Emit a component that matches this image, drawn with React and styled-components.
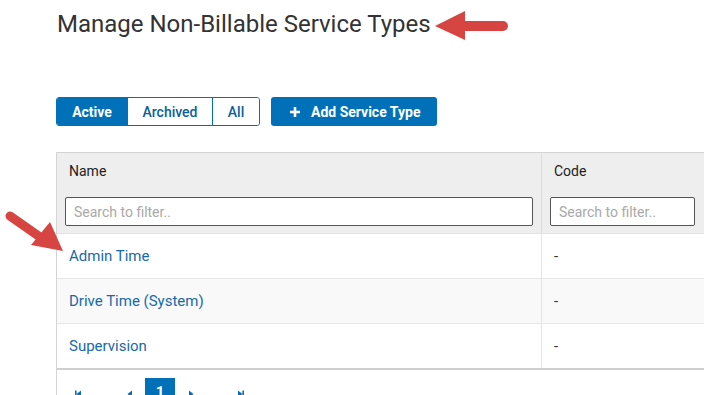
import React from "react";
import styled, { createGlobalStyle } from "styled-components";

const GlobalStyle = createGlobalStyle`
  html, body {
    margin: 0;
    padding: 0;
    background: #fff;
    overflow: hidden;
    font-family: Roboto, "Liberation Sans", sans-serif;
  }
`;

const Page = styled.div`
  position: relative;
  width: 704px;
  height: 395px;
  overflow: hidden;
  padding-left: 56px;
  box-sizing: border-box;
`;

const Title = styled.h1`
  margin: 0;
  padding-top: 8px;
  padding-left: 1px;
  font-size: 24px;
  font-weight: 400;
  color: #333;
  line-height: 32px;
`;

const Toolbar = styled.div`
  display: flex;
  gap: 11px;
  margin-top: 57px;
  height: 29px;
`;

const Group = styled.div`
  display: flex;
  border: 1px solid #0071b9;
  border-radius: 3px;
  overflow: hidden;
`;

const GroupButton = styled.button`
  border: none;
  border-left: ${(p) => (p.$first ? "none" : "1px solid #0071b9")};
  background: ${(p) => (p.$active ? "#0071b9" : "#fff")};
  color: ${(p) => (p.$active ? "#fff" : "#0a5f9c")};
  font-family: Roboto, "Liberation Sans", sans-serif;
  font-size: 14px;
  font-weight: ${(p) => (p.$active ? 700 : 500)};
  width: ${(p) => p.$w}px;
  padding: 0;
  cursor: pointer;
`;

const AddButton = styled.button`
  display: flex;
  align-items: center;
  gap: 10px;
  border: none;
  border-radius: 3px;
  background: #0071b9;
  color: #fff;
  font-family: Roboto, "Liberation Sans", sans-serif;
  font-size: 14px;
  font-weight: 700;
  width: 166px;
  padding: 0 0 0 18px;
  cursor: pointer;
`;

const Table = styled.div`
  margin-top: 26px;
  width: 650px;
  border: 1px solid #d4d4d4;
  border-bottom: none;
`;

const Row = styled.div`
  display: grid;
  grid-template-columns: 484px 1fr;
  background: ${(p) => p.$bg || "#fff"};
  border-bottom: 1px solid ${(p) => p.$line || "#e6e6e6"};
`;

const HeadCell = styled.div`
  padding: 9px 8px 7px 8px;
  border-left: ${(p) => (p.$divider ? "1px solid #dcdcdc" : "none")};
`;

const HeadLabel = styled.div`
  font-size: 14px;
  font-weight: 400;
  color: #222;
  padding-left: 4px;
  height: 18px;
  line-height: 18px;
  margin-bottom: 17px;
`;

const Filter = styled.input`
  box-sizing: border-box;
  width: ${(p) => p.$w || "100%"};
  height: 29px;
  border: 1px solid #555;
  border-radius: 2px;
  padding: 0 8px;
  font-family: Roboto, "Liberation Sans", sans-serif;
  font-size: 14px;
  color: #333;
  &::placeholder {
    color: #a9a9a9;
  }
`;

const Cell = styled.div`
  height: 44px;
  display: flex;
  align-items: center;
  padding-left: 12px;
  font-size: 15px;
  color: ${(p) => (p.$link ? "#1769aa" : "#333")};
  border-left: ${(p) => (p.$divider ? "1px solid #e3e3e3" : "none")};
`;

const Pager = styled.div`
  display: flex;
  align-items: flex-start;
  padding-top: 8px;
  height: 40px;
  border-top: 1px solid #cfcfcf;
`;

const PageIcon = styled.span`
  width: ${(p) => p.$w}px;
  box-sizing: border-box;
  display: flex;
  justify-content: ${(p) => (p.$end ? "flex-end" : "center")};
  padding-right: ${(p) => (p.$end ? "10px" : "0")};
  padding-top: 11px;
`;

const PageNum = styled.span`
  width: 30px;
  height: 28px;
  background: #0071b9;
  color: #fff;
  font-size: 15px;
  font-weight: 700;
  display: flex;
  justify-content: center;
  padding-top: 5px;
  box-sizing: border-box;
`;

const Annotation = styled.svg`
  position: absolute;
  left: ${(p) => p.$x}px;
  top: ${(p) => p.$y}px;
`;

const Tri = ({ dir = "right", bar }) => (
  <svg width="10" height="10" viewBox="0 0 10 10">
    {dir === "left" ? (
      <>
        <polygon points="7,1.5 7,8.5 2.5,5" fill="#0a6eb4" />
        {bar && <rect x="1" y="1.5" width="1.6" height="7" fill="#0a6eb4" />}
      </>
    ) : (
      <>
        <polygon points="3,1.5 3,8.5 7.5,5" fill="#0a6eb4" />
        {bar && <rect x="7.4" y="1.5" width="1.6" height="7" fill="#0a6eb4" />}
      </>
    )}
  </svg>
);

const rows = [
  { name: "Admin Time", bg: "#fff" },
  { name: "Drive Time (System)", bg: "#f9f9f9" },
  { name: "Supervision", bg: "#fff", line: "#cfcfcf" },
];

export default function App() {
  return (
    <>
      <GlobalStyle />
      <Page>
        <Title>Manage Non-Billable Service Types</Title>
        <Toolbar>
          <Group>
            <GroupButton $first $active $w={70}>Active</GroupButton>
            <GroupButton $w={85}>Archived</GroupButton>
            <GroupButton $w={47}>All</GroupButton>
          </Group>
          <AddButton>
            <svg width="12" height="12" viewBox="0 0 12 12">
              <path d="M6 1v10M1 6h10" stroke="#fff" strokeWidth="2.6" />
            </svg>
            Add Service Type
          </AddButton>
        </Toolbar>
        <Table>
          <Row $bg="#eeeeee" $line="#e2e2e2">
            <HeadCell>
              <HeadLabel>Name</HeadLabel>
              <Filter placeholder="Search to filter.." />
            </HeadCell>
            <HeadCell $divider>
              <HeadLabel>Code</HeadLabel>
              <Filter $w="145px" placeholder="Search to filter.." />
            </HeadCell>
          </Row>
          {rows.map((r) => (
            <Row key={r.name} $bg={r.bg} $line={r.line}>
              <Cell $link>{r.name}</Cell>
              <Cell $divider>-</Cell>
            </Row>
          ))}
          <Pager>
            <PageIcon $w={44}><Tri dir="left" bar /></PageIcon>
            <PageIcon $w={44} $end><Tri dir="left" /></PageIcon>
            <PageNum>1</PageNum>
            <PageIcon $w={32}><Tri /></PageIcon>
            <PageIcon $w={66}><Tri bar /></PageIcon>
          </Pager>
        </Table>

        <Annotation $x={430} $y={6} width="80" height="40" viewBox="0 0 80 40">
          <polygon points="5,20 35,5 35,34" fill="#d64541" />
          <line x1="30" y1="20" x2="73" y2="20" stroke="#d64541" strokeWidth="10" strokeLinecap="round" />
        </Annotation>
        <Annotation $x={0} $y={205} width="70" height="55" viewBox="0 0 70 55">
          <line x1="10" y1="11" x2="40" y2="32" stroke="#d64541" strokeWidth="9" strokeLinecap="round" />
          <polygon points="63,46 31,40 50,17" fill="#d64541" />
        </Annotation>
      </Page>
    </>
  );
}
